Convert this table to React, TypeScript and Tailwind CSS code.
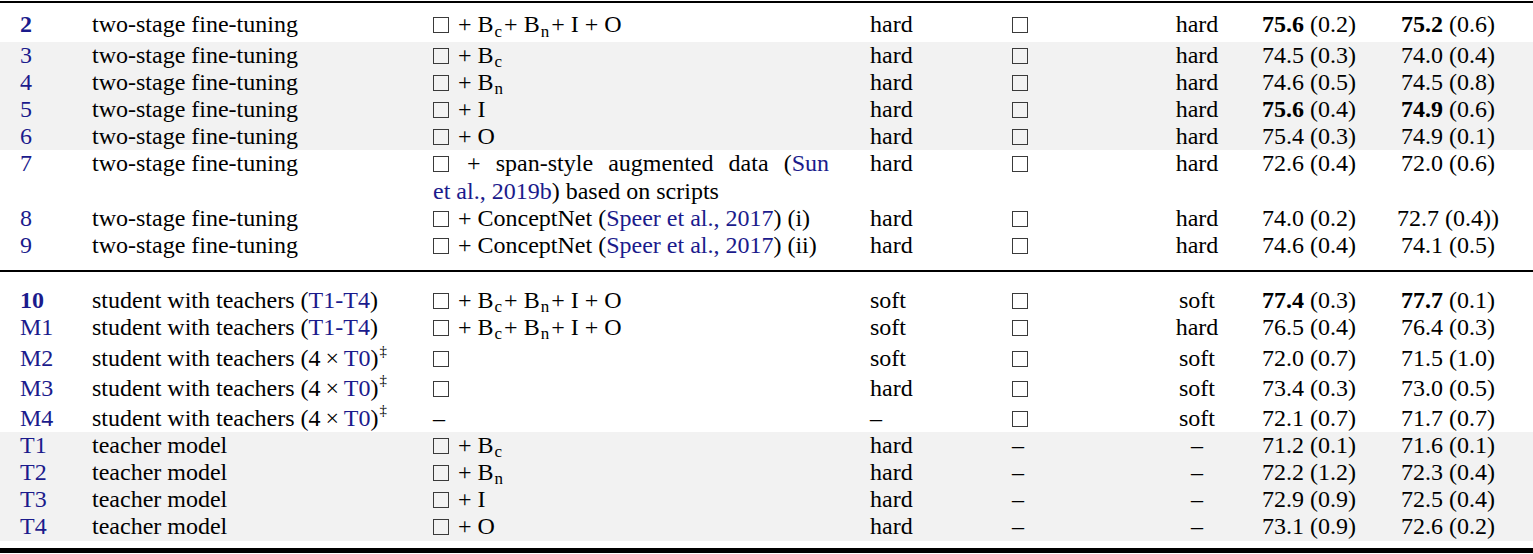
import React from 'react';

const Box = () => (
  <span className="inline-block w-[16px] h-[16px] border border-[#3a3a3a] align-[-1px] mr-[3px]" />
);

const Cite = ({ children }: { children: React.ReactNode }) => (
  <span className="text-[#1b1b8c]">{children}</span>
);

const Bc = () => (
  <>
    B<sub className="text-[17px] ml-[1px] mr-[2px]">c</sub>
  </>
);
const Bn = () => (
  <>
    B<sub className="text-[17px] ml-[1px] mr-[2px]">n</sub>
  </>
);

const Dag = () => <sup className="text-[15px] leading-none -top-[0.7em] ml-[1px]">‡</sup>;

const Score = ({ v, sd, bold }: { v: string; sd: string; bold?: boolean }) => (
  <span>
    {bold ? <b className="font-bold">{v}</b> : v} ({sd})
  </span>
);

type Row = {
  id: string;
  strong?: boolean;
  method: React.ReactNode;
  data: React.ReactNode;
  tgt: string;
  box: boolean;
  tgt2: string;
  a: [string, string, boolean?];
  b: [string, string, boolean?];
  gray?: boolean;
  tall?: boolean;
  twoLine?: boolean;
};

const all = (
  <>
    <Box /> + <Bc />+ <Bn />+ I + O
  </>
);

const tsf = 'two-stage fine-tuning';
const swt = (
  <>
    student with teachers (<Cite>T1-T4</Cite>)
  </>
);
const sw0 = (
  <>
    student with teachers (4{'\u2009'}×{'\u2009'}<Cite>T0</Cite>)
    <Dag />
  </>
);

const top: Row[] = [
  { id: '2', strong: true, method: tsf, data: all, tgt: 'hard', box: true, tgt2: 'hard', a: ['75.6', '0.2', true], b: ['75.2', '0.6', true] },
  { id: '3', method: tsf, data: <><Box /> + <Bc /></>, tgt: 'hard', box: true, tgt2: 'hard', a: ['74.5', '0.3'], b: ['74.0', '0.4'], gray: true },
  { id: '4', method: tsf, data: <><Box /> + <Bn /></>, tgt: 'hard', box: true, tgt2: 'hard', a: ['74.6', '0.5'], b: ['74.5', '0.8'], gray: true },
  { id: '5', method: tsf, data: <><Box /> + I</>, tgt: 'hard', box: true, tgt2: 'hard', a: ['75.6', '0.4', true], b: ['74.9', '0.6', true], gray: true },
  { id: '6', method: tsf, data: <><Box /> + O</>, tgt: 'hard', box: true, tgt2: 'hard', a: ['75.4', '0.3'], b: ['74.9', '0.1'], gray: true },
  {
    id: '7',
    method: tsf,
    twoLine: true,
    data: (
      <div className="w-[396px]">
        <div className="text-justify [text-align-last:justify]">
          <Box /> + span-style augmented data (<Cite>Sun</Cite>
        </div>
        <div>
          <Cite>et al., 2019b</Cite>) based on scripts
        </div>
      </div>
    ),
    tgt: 'hard',
    box: true,
    tgt2: 'hard',
    a: ['72.6', '0.4'],
    b: ['72.0', '0.6'],
  },
  { id: '8', method: tsf, data: <><Box /> + ConceptNet (<Cite>Speer et al., 2017</Cite>) (i)</>, tgt: 'hard', box: true, tgt2: 'hard', a: ['74.0', '0.2'], b: ['72.7', '0.4)'] },
  { id: '9', method: tsf, data: <><Box /> + ConceptNet (<Cite>Speer et al., 2017</Cite>) (ii)</>, tgt: 'hard', box: true, tgt2: 'hard', a: ['74.6', '0.4'], b: ['74.1', '0.5'] },
];

const bottom: Row[] = [
  { id: '10', strong: true, method: swt, data: all, tgt: 'soft', box: true, tgt2: 'soft', a: ['77.4', '0.3', true], b: ['77.7', '0.1', true] },
  { id: 'M1', method: swt, data: all, tgt: 'soft', box: true, tgt2: 'hard', a: ['76.5', '0.4'], b: ['76.4', '0.3'] },
  { id: 'M2', method: sw0, data: <Box />, tgt: 'soft', box: true, tgt2: 'soft', a: ['72.0', '0.7'], b: ['71.5', '1.0'], tall: true },
  { id: 'M3', method: sw0, data: <Box />, tgt: 'hard', box: true, tgt2: 'soft', a: ['73.4', '0.3'], b: ['73.0', '0.5'], tall: true },
  { id: 'M4', method: sw0, data: '–', tgt: '–', box: true, tgt2: 'soft', a: ['72.1', '0.7'], b: ['71.7', '0.7'], tall: true },
  { id: 'T1', method: 'teacher model', data: <><Box /> + <Bc /></>, tgt: 'hard', box: false, tgt2: '–', a: ['71.2', '0.1'], b: ['71.6', '0.1'], gray: true },
  { id: 'T2', method: 'teacher model', data: <><Box /> + <Bn /></>, tgt: 'hard', box: false, tgt2: '–', a: ['72.2', '1.2'], b: ['72.3', '0.4'], gray: true },
  { id: 'T3', method: 'teacher model', data: <><Box /> + I</>, tgt: 'hard', box: false, tgt2: '–', a: ['72.9', '0.9'], b: ['72.5', '0.4'], gray: true },
  { id: 'T4', method: 'teacher model', data: <><Box /> + O</>, tgt: 'hard', box: false, tgt2: '–', a: ['73.1', '0.9'], b: ['72.6', '0.2'], gray: true },
];

function TableRow({ r }: { r: Row }) {
  const h = r.twoLine ? 'h-[54.4px]' : r.tall ? 'h-[29.7px] pt-[2.5px]' : 'h-[27.2px]';
  return (
    <div
      className={`grid grid-cols-[72px_341px_437px_142px_130px_110px_114px_164px] pl-[20px] items-start leading-[27.2px] ${h} ${
        r.gray ? 'bg-[#f2f2f2]' : ''
      }`}
    >
      <div className={`text-[#1b1b8c] ${r.strong ? 'font-bold' : ''}`}>{r.id}</div>
      <div className="whitespace-nowrap">{r.method}</div>
      <div className="whitespace-nowrap">{r.data}</div>
      <div>{r.tgt}</div>
      <div>{r.box ? <Box /> : '–'}</div>
      <div className="text-center">{r.tgt2}</div>
      <div className="text-center whitespace-nowrap">
        <Score v={r.a[0]} sd={r.a[1]} bold={r.a[2]} />
      </div>
      <div className="text-center whitespace-nowrap">
        <Score v={r.b[0]} sd={r.b[1]} bold={r.b[2]} />
      </div>
    </div>
  );
}

export default function App() {
  return (
    <div className="w-[1533px] h-[554px] overflow-hidden bg-white text-black text-[24px] font-['Liberation_Serif','Times_New_Roman',serif]">
      <div className="h-[1px]" />
      <div className="h-[2px] bg-black" />
      <div className="h-[8.4px]" />
      <TableRow r={top[0]} />
      <div className="h-[3px]" />
      {top.slice(1).map((r) => (
        <TableRow key={r.id} r={r} />
      ))}
      <div className="h-[11px]" />
      <div className="h-[2px] bg-black" />
      <div className="h-[14.8px]" />
      {bottom.slice(0, 2).map((r) => (
        <TableRow key={r.id} r={r} />
      ))}
      <div className="h-[1.5px]" />
      {bottom.slice(2).map((r) => (
        <TableRow key={r.id} r={r} />
      ))}
      <div className="h-[7px]" />
      <div className="h-[5px] bg-black" />
    </div>
  );
}
